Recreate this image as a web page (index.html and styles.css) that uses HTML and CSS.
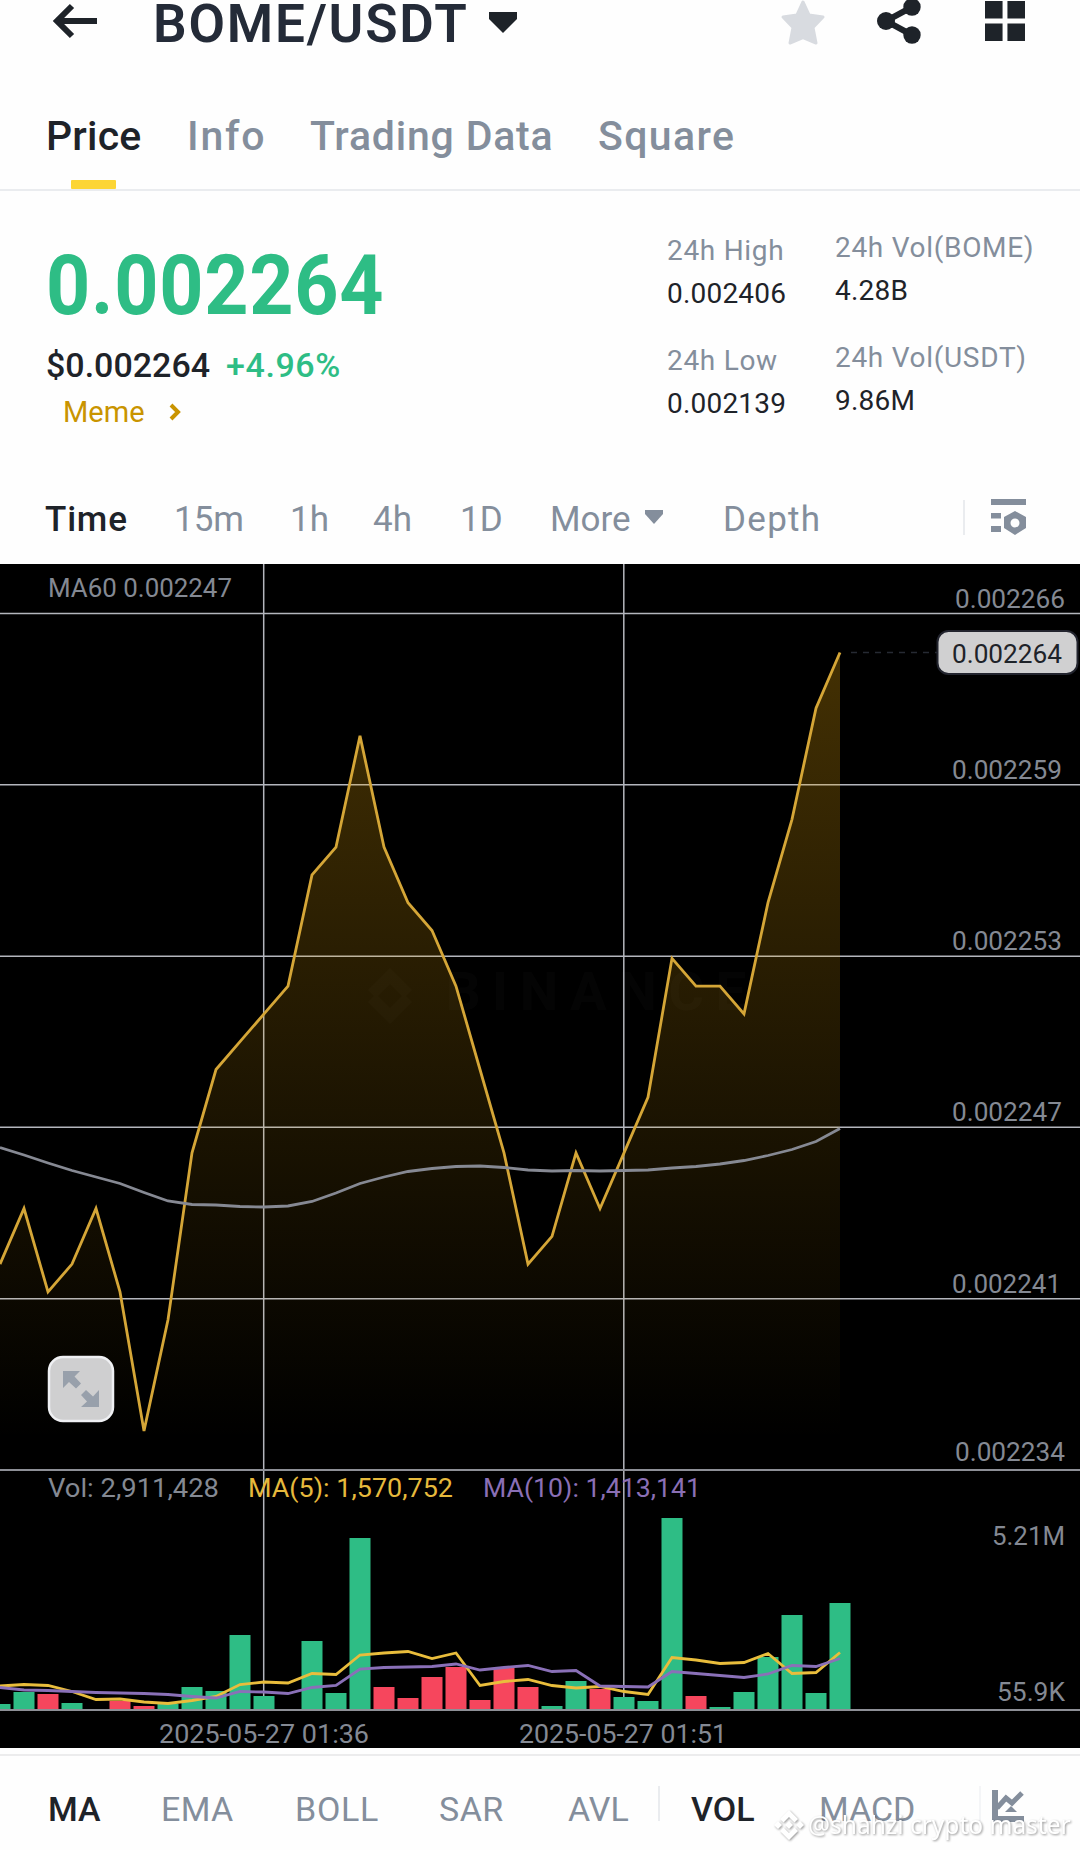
FILE: index.html
```html
<!DOCTYPE html>
<html>
	<head>
		<meta charset="utf-8">
		<link rel="stylesheet" href="styles.css">
		<title>BOME/USDT</title>
	</head>
	<body>
		<div class="header">
			<svg class="back" width="46" height="36" viewBox="0 0 46 36"><path d="M20 3 L5 18 L20 33 M4 18 H45" fill="none" stroke="#1e2329" stroke-width="6"/></svg>
			<span class="pair">BOME/USDT</span>
			<svg class="pair-caret" width="28" height="21" viewBox="0 0 28 21"><path d="M0 0H28V7L14 21L0 7Z" fill="#1e2329"/></svg>
			<svg class="star" width="46" height="48" viewBox="0 0 46 48"><path d="M23 4L29 17L43 19L33 29.500L36 45L23 39.500L10 45L13 29.500L3 19L17 17Z" fill="#d8dbe0" stroke="#d8dbe0" stroke-width="3" stroke-linejoin="round"/></svg>
			<svg class="share" width="44" height="46" viewBox="0 0 44 46"><path d="M35 9L9 23L35 37" fill="none" stroke="#1e2329" stroke-width="6"/><g fill="#1e2329"><circle cx="35" cy="9" r="8.700"/><circle cx="9" cy="23" r="9"/><circle cx="35" cy="37" r="8.700"/></g></svg>
			<svg class="grid" width="40" height="40" viewBox="0 0 41 41"><path d="M0 0H18V18H0ZM23 0H41V18H23ZM0 23H18V41H0ZM23 23H41V41H23Z" fill="#1e2329"/></svg>
		</div>
		<div class="tabs">
			<a class="tab active">Price</a>
			<a class="tab info">Info</a>
			<a class="tab trading">Trading Data</a>
			<a class="tab square">Square</a>
		</div>
		<div class="ticker">
			<div class="ticker-left">
				<div class="last">0.002264</div>
				<div class="fiat"><span class="usd">$0.002264</span><span class="change">+4.96%</span></div>
				<div class="tag"><span>Meme</span><svg width="12" height="18" viewBox="0 0 12 18"><path d="M2 2L9 9L2 16" fill="none" stroke="#c99400" stroke-width="4"/></svg></div>
			</div>
			<div class="stats">
				<div class="label">24h High</div>
				<div class="value">0.002406</div>
				<div class="label second">24h Low</div>
				<div class="value">0.002139</div>
			</div>
			<div class="stats vol">
				<div class="label">24h Vol(BOME)</div>
				<div class="value">4.28B</div>
				<div class="label second">24h Vol(USDT)</div>
				<div class="value">9.86M</div>
			</div>
		</div>
		<div class="intervals">
			<span class="i-time active">Time</span>
			<span class="i-15m">15m</span>
			<span class="i-1h">1h</span>
			<span class="i-4h">4h</span>
			<span class="i-1d">1D</span>
			<span class="i-more">More</span>
			<svg class="more-caret" width="18" height="14" viewBox="0 0 18 14"><path d="M0 0H18V4L9 14L0 4Z" fill="#848e9c"/></svg>
			<span class="i-depth">Depth</span>
			<i class="divider"></i>
			<svg class="settings" width="35" height="36" viewBox="0 0 35 36"><path fill="#848e9c" fill-rule="evenodd" d="M0 0H35V6H0ZM0 14H10V19.500H0ZM0 27H10V33H0ZM24 12L35 18V29L24 36L13 29V18ZM24 19.500A4.500 4.500 0 1 0 24 28.500A4.500 4.500 0 1 0 24 19.500Z"/></svg>
		</div>
		<div class="chart">
			<svg id="chart" width="1080" height="1184" viewBox="0 564 1080 1184">
				<defs>
					<linearGradient id="fade" gradientUnits="userSpaceOnUse" x1="0" y1="652" x2="0" y2="1440">
						<stop offset="0" stop-color="#f0ac0b" stop-opacity="0.28"/>
						<stop offset="1" stop-color="#f0ac0b" stop-opacity="0"/>
					</linearGradient>
				</defs>
				<g class="brand">
					<path d="M390 968L412 990L404 998L390 984L376 998L368 990ZM390 1024L368 1002L376 994L390 1008L404 994L412 1002Z"/>
					<text x="446" y="1010" textLength="300">BINANCE</text>
				</g>
				<g id="gridlines"></g>
				<g class="axis">
					<text x="48" y="597" textLength="184" lengthAdjust="spacingAndGlyphs">MA60 0.002247</text>
					<text x="955" y="607.500" textLength="110" lengthAdjust="spacingAndGlyphs">0.002266</text>
					<text x="952" y="779" textLength="110" lengthAdjust="spacingAndGlyphs">0.002259</text>
					<text x="952" y="950" textLength="110" lengthAdjust="spacingAndGlyphs">0.002253</text>
					<text x="952" y="1121" textLength="110" lengthAdjust="spacingAndGlyphs">0.002247</text>
					<text x="952" y="1293" textLength="109" lengthAdjust="spacingAndGlyphs">0.002241</text>
					<text x="955" y="1461" textLength="110" lengthAdjust="spacingAndGlyphs">0.002234</text>
					<text x="992" y="1545" textLength="73" lengthAdjust="spacingAndGlyphs">5.21M</text>
					<text x="997" y="1701" textLength="68" lengthAdjust="spacingAndGlyphs">55.9K</text>
					<text x="159" y="1742.500" textLength="210" lengthAdjust="spacingAndGlyphs">2025-05-27 01:36</text>
					<text x="519" y="1742.500" textLength="208" lengthAdjust="spacingAndGlyphs">2025-05-27 01:51</text>
					<text x="48" y="1497" textLength="171" lengthAdjust="spacingAndGlyphs">Vol: 2,911,428</text>
					<text class="ma5" x="248" y="1497" textLength="205" lengthAdjust="spacingAndGlyphs">MA(5): 1,570,752</text>
					<text class="ma10" x="483" y="1497" textLength="218" lengthAdjust="spacingAndGlyphs">MA(10): 1,413,141</text>
				</g>
				<g id="bars"></g>
				<path id="area" fill="url(#fade)"/>
				<polyline id="price" class="line price-line"/>
				<polyline id="ma60" class="line ma60-line"/>
				<polyline id="vma5" class="line ma5-line"/>
				<polyline id="vma10" class="line ma10-line"/>
				<path class="dash" d="M851 652.500H938"/>
				<rect class="pill" x="937.500" y="631" width="140" height="43" rx="11"/>
				<text class="pill-text" x="952" y="662.500" textLength="110" lengthAdjust="spacingAndGlyphs">0.002264</text>
				<rect class="expand" x="49" y="1357" width="64" height="64" rx="14"/>
				<path fill="#98a0ab" d="M63 1371H80L74.500 1376.500L81 1383.500L76 1388.500L69 1382L63 1388ZM99 1407H81L87 1401.500L81 1395L86 1390L93 1396.500L99 1390Z"/>
			</svg>
		</div>
		<div class="indicators">
			<span class="n-ma active">MA</span>
			<span class="n-ema">EMA</span>
			<span class="n-boll">BOLL</span>
			<span class="n-sar">SAR</span>
			<span class="n-avl">AVL</span>
			<i class="divider"></i>
			<span class="n-vol active">VOL</span>
			<span class="n-macd">MACD</span>
			<i class="divider faint"></i>
			<svg class="chart-icon" width="33" height="32" viewBox="0 0 33 32"><path d="M0 0H6V26H32V32H0Z" fill="#848e9c"/><path d="M5 18L14 8L20 13L30 3" fill="none" stroke="#848e9c" stroke-width="5"/><path d="M13 22L19 16L25 22Z" fill="#848e9c"/></svg>
			<div class="watermark">
				<svg width="30" height="30" viewBox="0 0 30 30"><path fill="#fff" d="M15 0L24 9L20.500 12.500L15 7L9.500 12.500L6 9ZM15 30L24 21L20.500 17.500L15 23L9.500 17.500L6 21ZM15 11L19 15L15 19L11 15ZM4 11L8 15L4 19L0 15ZM26 11L30 15L26 19L22 15Z"/></svg>
				<span>@shahzi crypto master</span>
			</div>
		</div>
		<script>
			var STEP = 24;
			var BASE = 1709;
			// ticks below the last price, one per minute
			var price = [22,20,23,22,20,23,28,24,18,15,14,13,12,8,7,3,7,9,10,12,15,18,22,21,18,20,18,16,11,12,12,13,9,6,2,0];
			var ma60 = [1147.5,1155,1163,1170.5,1177,1183.5,1192.5,1201,1204.5,1205,1206.5,1207,1206,1201.5,1193,1183.5,1177,1171.5,1168.5,1166.5,1166,1167.5,1170,1171,1170.5,1171,1170.5,1170,1168,1166.5,1164,1160.5,1155.5,1149.5,1141.5,1128.5];
			// bar heights, negative is a down bar
			var vol = [5,17,-15,6,0,-8,-3,5,22,18,74,13,0,68,16,171,-22,-11,-32,-42,-9,-41,-22,3,28,-20,12,8,191,-13,2,17,52,94,16,106];
			var vma5 = [1686,1684.5,1685.5,1691.5,1699.5,1699,1702,1703.5,1700.5,1696.5,1684.5,1682,1683,1673.5,1674.5,1655,1653,1651.5,1658.5,1653,1685.5,1681.5,1679.5,1685.5,1688,1686.5,1691.5,1694.5,1657.5,1660,1663.5,1662.5,1653.5,1673.5,1672.5,1652.5];
			var vma10 = [1687.5,1690,1690.5,1691.5,1692.5,1693,1693.5,1694.5,1696.5,1698,1691.5,1692,1693.5,1687.5,1685.5,1669,1667.5,1667,1666.5,1664,1670,1667.5,1665.5,1671.5,1670.5,1686,1686.5,1687,1671.5,1673.5,1675.5,1677.5,1674,1665.5,1666.5,1658.5];

			function points(list)
			{
				return list.map(function (y, i) { return (i * STEP) + "," + y; }).join(" ");
			}

			var priceY = price.map(function (n) { return 652.5 + n * 27.8; });
			document.getElementById("price").setAttribute("points", points(priceY));
			document.getElementById("area").setAttribute("d", "M0,1470 L" + points(priceY) + " L840,1470 Z");
			document.getElementById("ma60").setAttribute("points", points(ma60));
			document.getElementById("vma5").setAttribute("points", points(vma5));
			document.getElementById("vma10").setAttribute("points", points(vma10));

			var bars = "";
			for(var i = 0; i < vol.length; i++) {
				var h = Math.abs(vol[i]);
				bars += "<rect x=\"" + (i * STEP - 10.5) + "\" y=\"" + (BASE - h) + "\" width=\"21\" height=\"" + h + "\" fill=\"" + (vol[i] < 0 ? "#f6465d" : "#2ebd85") + "\"/>";
			}
			document.getElementById("bars").innerHTML = bars;

			var lines = "";
			[613.5, 784.7, 956.2, 1127.3, 1298.7].forEach(function (y) {
				lines += "<path d=\"M0 " + y + "H1080\"/>";
			});
			lines += "<path d=\"M263.7 564V1709M623.8 564V1709\"/>";
			lines += "<path class=\"edge\" d=\"M0 1470H1080M0 1710H1080\"/>";
			document.getElementById("gridlines").innerHTML = lines;
		</script>
	</body>
</html>
```
FILE: styles.css
```css
* {
	box-sizing: border-box;
}
body {
	margin: 0;
	width: 1080px;
	height: 1850px;
	overflow: hidden;
	background-color: #fefefe;
	color: #1e2329;
	font-family: Roboto, "Liberation Sans", sans-serif;
}
svg {
	display: block;
	flex: none;
}
span, a {
	white-space: nowrap;
	flex: none;
}
.active {
	color: #1e2329;
	font-weight: 500;
}
.header {
	display: flex;
	align-items: flex-start;
	height: 92px;
	padding-left: 52px;
}
.back {
	margin-top: 3px;
}
.pair {
	width: 314px;
	margin: -7px 0 0 55px;
	font-size: 53px;
	line-height: 62px;
	font-weight: 600;
	letter-spacing: 1.8px;
	color: #242b38;
}
.pair-caret {
	margin: 12px 0 0 22px;
}
.star {
	margin: -2px 0 0 263px;
}
.share {
	margin: -2px 0 0 51px;
}
.grid {
	margin: 1px 0 0 64px;
}
.tabs {
	display: flex;
	height: 99px;
	padding-left: 46px;
	border-bottom: 2px solid #eaecef;
	font-size: 41px;
	line-height: 89px;
	font-weight: 500;
	letter-spacing: 0.8px;
	color: #848e9c;
}
.tab.active {
	position: relative;
	width: 141px;
	letter-spacing: 0.2px;
}
.tab.active::after {
	content: "";
	position: absolute;
	left: 25px;
	bottom: 0;
	width: 45px;
	height: 9px;
	border-radius: 1px;
	background-color: #fcd535;
}
.info {
	width: 123px;
	letter-spacing: 1.8px;
}
.trading {
	width: 288px;
}
.square {
	letter-spacing: 1.4px;
}
.ticker {
	display: flex;
	height: 291px;
}
.ticker-left {
	width: 667px;
	padding: 46px 0 0 46px;
}
.last {
	font-size: 83px;
	line-height: 98px;
	font-weight: 700;
	letter-spacing: 0.8px;
	color: #2ebd85;
	transform-origin: left;
	transform: scaleX(0.93);
}
.fiat {
	display: flex;
	margin-top: 10px;
	font-size: 34px;
	line-height: 40px;
	font-weight: 500;
}
.usd {
	width: 180px;
}
.change {
	letter-spacing: 0.6px;
	color: #2ebd85;
}
.tag {
	display: flex;
	align-items: center;
	margin: 10px 0 0 17px;
	font-size: 29px;
	line-height: 34px;
	color: #c99400;
}
.tag span {
	width: 106px;
}
.stats {
	width: 168px;
	padding-top: 43px;
	font-size: 28px;
	line-height: 34px;
	letter-spacing: 0.2px;
	white-space: nowrap;
}
.stats.vol {
	padding-top: 40px;
}
.label {
	letter-spacing: 0.7px;
	color: #848e9c;
}
.value {
	margin-top: 9px;
}
.second {
	margin-top: 33px;
}
.intervals {
	display: flex;
	align-items: center;
	height: 82px;
	padding: 0 0 12px 45px;
	font-size: 35px;
	color: #848e9c;
}
.intervals span {
	padding-top: 5px;
}
.chart {
	height: 1184px;
	background-color: #000;
}
.brand {
	fill: #fff;
	opacity: 0.014;
	font-size: 54px;
	font-weight: 700;
}
.axis {
	font-size: 26px;
	fill: #848993;
}
.axis .ma5 {
	fill: #e6b93c;
}
.axis .ma10 {
	fill: #8a6fb5;
}
#gridlines {
	stroke: #b4b6bd;
	stroke-width: 1.5;
}
.edge {
	stroke: #8d8f96;
	stroke-width: 2;
}
.line {
	fill: none;
	stroke-width: 2.8;
}
.price-line {
	stroke: #d5a637;
}
.ma60-line {
	stroke: #868993;
}
.ma5-line {
	stroke: #e9bd3c;
}
.ma10-line {
	stroke: #8a70b8;
}
.dash {
	stroke: #262a33;
	stroke-width: 1.5;
	stroke-dasharray: 6 6;
}
.pill {
	fill: #d0d0d1;
	stroke: #22242e;
	stroke-width: 2;
}
.pill-text {
	font-size: 26px;
	fill: #1e2329;
}
.expand {
	fill: #cfcfd0;
	stroke: #eff0f3;
	stroke-width: 2.5;
}
.indicators {
	position: relative;
	display: flex;
	align-items: center;
	height: 96px;
	margin-top: 6px;
	padding-left: 48px;
	border-top: 2px solid #ececed;
	font-size: 34px;
	color: #848e9c;
}
.indicators > span {
	padding-top: 11px;
}
.divider {
	flex: none;
	width: 2px;
	height: 35px;
	background-color: #eaecef;
}
.i-time {
	width: 129px;
	letter-spacing: 0.8px;
}
.i-15m {
	width: 116px;
}
.i-1h {
	width: 83px;
}
.i-4h {
	width: 87px;
}
.i-1d {
	width: 90px;
}
.i-more {
	width: 95px;
}
.i-depth {
	width: 240px;
	margin-left: 60px;
	letter-spacing: 1.3px;
}
.settings {
	margin-left: 26px;
}
.n-ma {
	width: 113px;
}
.n-ema {
	width: 134px;
	letter-spacing: 0.4px;
}
.n-boll {
	width: 144px;
	letter-spacing: 0.7px;
}
.n-sar {
	width: 129px;
	letter-spacing: 0.5px;
}
.n-avl {
	width: 90px;
}
.n-vol {
	width: 128px;
	margin-left: 31px;
}
.n-macd {
	width: 160px;
}
.faint {
	opacity: 0.5;
}
.chart-icon {
	margin: 5px 0 0 11px;
}
.watermark {
	position: absolute;
	left: 774px;
	top: 51px;
	display: flex;
	align-items: center;
	font-family: "Noto Sans", sans-serif;
	font-size: 24.5px;
	line-height: 36px;
	color: #fff;
	filter: drop-shadow(1px 1px 1px rgba(0, 0, 0, 0.4));
}
.watermark span {
	margin-left: 4px;
}
```
